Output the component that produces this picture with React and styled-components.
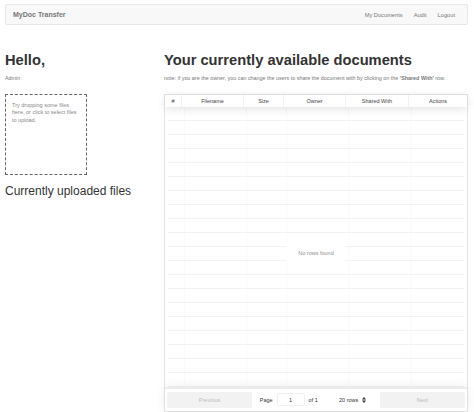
import React from "react";
import styled, { createGlobalStyle } from "styled-components";

const GlobalStyle = createGlobalStyle`
  html, body {
    margin: 0;
    padding: 0;
    background: #fff;
  }
  body {
    font-family: "Liberation Sans", Arial, sans-serif;
    color: #333;
  }
  * {
    box-sizing: border-box;
  }
`;

const Page = styled.div`
  width: 474px;
  height: 412px;
  padding: 4px 6px 0 5px;
  overflow: hidden;
`;

const Navbar = styled.nav`
  height: 21px;
  display: flex;
  align-items: center;
  justify-content: space-between;
  background: #f8f8f8;
  border: 1px solid #e7e7e7;
  border-radius: 2px;
  padding: 0 12px 0 7px;
`;

const Brand = styled.span`
  font-size: 7px;
  font-weight: bold;
  color: #777;
`;

const NavLinks = styled.div`
  display: flex;
  gap: 11px;
`;

const NavLink = styled.a`
  font-size: 5.7px;
  color: #777;
  text-decoration: none;
`;

const Main = styled.div`
  display: grid;
  grid-template-columns: 159px 1fr;
  margin-top: 27px;
`;

const Column = styled.div`
  display: flex;
  flex-direction: column;
  align-items: flex-start;
`;

const Title = styled.h1`
  margin: 0;
  font-size: 14.7px;
  line-height: 17px;
  font-weight: bold;
  color: #333;
`;

const Small = styled.p`
  margin: 6px 0 0;
  font-size: 5.4px;
  line-height: 6.5px;
  color: #777;
  white-space: nowrap;
`;

const Dropzone = styled.div`
  margin-top: 12px;
  width: 82px;
  height: 81px;
  border: 1px dashed #666;
  padding: 7px 6px;
  font-size: 5.5px;
  line-height: 7.6px;
  color: #888;
`;

const SubTitle = styled.h2`
  margin: 9px 0 0;
  font-size: 12px;
  line-height: 14px;
  font-weight: normal;
  color: #333;
`;

const cols = "17px 62px 40px 62px 63px 1fr";

const Table = styled.div`
  position: relative;
  margin-top: 12px;
  width: 304px;
  border: 1px solid rgba(0, 0, 0, 0.1);
  display: flex;
  flex-direction: column;
`;

const HeadRow = styled.div`
  position: relative;
  z-index: 1;
  display: grid;
  grid-template-columns: ${cols};
  height: 12px;
  box-shadow: 0 2px 10px 0 rgba(0, 0, 0, 0.12);
  background: #fff;
`;

const HeadCell = styled.div`
  font-size: 5.5px;
  line-height: 12px;
  text-align: center;
  color: #444;
  border-right: 1px solid rgba(0, 0, 0, 0.05);
  &:last-child {
    border-right: none;
  }
`;

const Body = styled.div`
  padding: 0 3px;
`;

const Row = styled.div`
  display: grid;
  grid-template-columns: ${cols};
  height: 14px;
  border-bottom: 1px solid rgba(0, 0, 0, 0.05);
`;

const Cell = styled.div`
  border-right: 1px solid rgba(0, 0, 0, 0.02);
  &:last-child {
    border-right: none;
  }
`;

const NoData = styled.div`
  position: absolute;
  left: 50%;
  top: 50%;
  transform: translate(-50%, -50%);
  z-index: 2;
  background: rgba(255, 255, 255, 0.85);
  padding: 6px 12px;
  font-size: 5.5px;
  color: rgba(0, 0, 0, 0.5);
  white-space: nowrap;
`;

const Pagination = styled.div`
  position: relative;
  z-index: 1;
  display: flex;
  align-items: stretch;
  height: 24px;
  padding: 3px 2px 3px 2px;
  border-top: 2px solid rgba(0, 0, 0, 0.08);
  box-shadow: 0 0 12px 0 rgba(0, 0, 0, 0.08);
  background: #fff;
`;

const PageButton = styled.button`
  flex: 1;
  border: none;
  border-radius: 2px;
  background: #f2f2f2;
  color: #bbb;
  font-family: inherit;
  font-size: 5.5px;
  padding: 0;
`;

const Center = styled.div`
  flex: 1.5;
  display: flex;
  align-items: center;
  justify-content: space-around;
  font-size: 5.5px;
  color: #333;
`;

const PageInfo = styled.span`
  display: flex;
  align-items: center;
  gap: 4px;
`;

const PageInput = styled.span`
  display: inline-block;
  width: 28px;
  height: 13px;
  line-height: 13px;
  border: 1px solid rgba(0, 0, 0, 0.06);
  border-radius: 2px;
  text-align: center;
  background: #fff;
`;

const Select = styled.span`
  display: flex;
  align-items: center;
  gap: 4px;
  height: 13px;
  padding: 0 6px;
  border-radius: 2px;
  background: #fff;
`;

const headers = ["#", "Filename", "Size", "Owner", "Shared With", "Actions"];

function SortArrows() {
  return (
    <svg width="4" height="6" viewBox="0 0 4 6">
      <path d="M2 0 L4 2.4 L0 2.4 Z" fill="#333" />
      <path d="M2 6 L4 3.6 L0 3.6 Z" fill="#333" />
    </svg>
  );
}

export default function App() {
  const rows = Array.from({ length: 20 }, (_, i) => i);

  return (
    <Page>
      <GlobalStyle />
      <Navbar>
        <Brand>MyDoc Transfer</Brand>
        <NavLinks>
          <NavLink href="#">My Documents</NavLink>
          <NavLink href="#">Audit</NavLink>
          <NavLink href="#">Logout</NavLink>
        </NavLinks>
      </Navbar>
      <Main>
        <Column>
          <Title>Hello,</Title>
          <Small>Admin</Small>
          <Dropzone>
            Try dropping some files here, or click to select files to upload.
          </Dropzone>
          <SubTitle>Currently uploaded files</SubTitle>
        </Column>
        <Column>
          <Title>Your currently available documents</Title>
          <Small>
            note: if you are the owner, you can change the users to share the
            document with by clicking on the <b>'Shared With'</b> row.
          </Small>
          <Table>
            <HeadRow>
              {headers.map((h) => (
                <HeadCell key={h}>{h}</HeadCell>
              ))}
            </HeadRow>
            <Body>
              {rows.map((r) => (
                <Row key={r}>
                  {headers.map((h) => (
                    <Cell key={h} />
                  ))}
                </Row>
              ))}
            </Body>
            <Pagination>
              <PageButton disabled>Previous</PageButton>
              <Center>
                <PageInfo>
                  Page <PageInput>1</PageInput> of 1
                </PageInfo>
                <Select>
                  20 rows <SortArrows />
                </Select>
              </Center>
              <PageButton disabled>Next</PageButton>
            </Pagination>
            <NoData>No rows found</NoData>
          </Table>
        </Column>
      </Main>
    </Page>
  );
}
